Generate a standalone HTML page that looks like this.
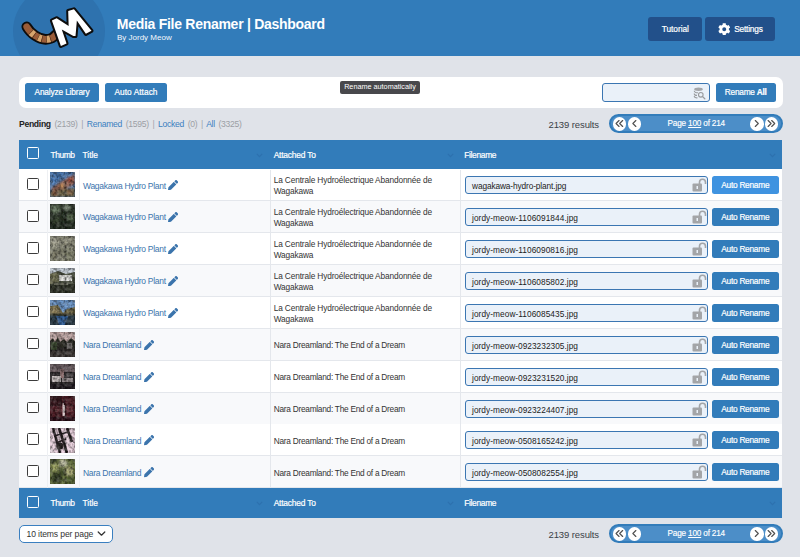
<!DOCTYPE html>
<html><head><meta charset="utf-8">
<style>
*{box-sizing:border-box;margin:0;padding:0}
html,body{width:800px;height:557px;overflow:hidden}
body{background:#e0e3e9;font-family:"Liberation Sans",sans-serif;font-size:8px;color:#333;position:relative}
div,span{white-space:nowrap}
.hdr{position:absolute;left:0;top:0;width:800px;height:56.400px;background:#327cba;overflow:hidden}
.circ{position:absolute;left:12.5px;top:-15px;width:92px;height:92px;border-radius:50%;background:#2e72ae}
.logo{position:absolute;left:15px;top:0;width:90px;height:56px}
.h1{position:absolute;left:116.800px;top:15.600px;font-size:14px;line-height:16px;font-weight:bold;color:#fff;letter-spacing:-0.277px}
.h2{position:absolute;left:117px;top:33.100px;font-size:8px;line-height:10px;color:#f4f8fc}
.hb{position:absolute;-webkit-text-stroke:0.200px #fff;top:16.500px;height:24.500px;background:#22508a;border-radius:3px;color:#fff;font-size:8.3px;line-height:24.500px}
.hb span{position:absolute;top:0}
.tb{position:absolute;left:18.500px;top:77px;width:764px;height:31.200px;background:#fff;border-radius:7px}
.btn{position:absolute;-webkit-text-stroke:0.200px #fff;height:18.500px;background:#327cba;border-radius:2.500px;color:#fff;font-size:8.3px;line-height:18.500px;text-align:center}
.tip{position:absolute;left:340px;top:81px;width:80px;height:12.500px;background:#48484c;border-radius:2px;color:#fff;font-size:7.250px;line-height:12.500px;text-align:center}
.inp{position:absolute;background:#eaf1f9;border:1.500px solid #3b76b2;border-radius:3px}
.filt{position:absolute;left:19px;top:119px;font-size:8.6px;line-height:11px;color:#9c9fa5;letter-spacing:-0.3px;word-spacing:1.6px}
.filt b{color:#222}.filt a{color:#3b7fc0}.filt s{text-decoration:none;color:#a2a5ab}
.res{position:absolute;font-size:9.5px;line-height:12px;color:#3b3f47;left:548.5px;letter-spacing:-0.105px}
.pg{position:absolute;left:609px;width:173.500px;height:18.750px;border-radius:9.500px;background:#4c8ec8;border:2px solid #327cba;color:#fff;font-size:8.2px;line-height:15px;letter-spacing:-0.174px}
.pg span{position:absolute;left:56.500px;top:0;-webkit-text-stroke:0.150px #fff}
.pg i{position:absolute;top:0.750px;width:13.500px;height:13.500px;border-radius:50%;background:#fff}
.pg svg{position:absolute;left:0;top:0}
.th{position:absolute;-webkit-text-stroke:0.200px #fff;left:18.500px;width:763.500px;height:30px;background:#327cba;color:#fff;font-size:8.4px;line-height:30px}
.th span{position:absolute;top:0}
.cb{position:absolute;left:8.900px;width:11.800px;height:11.500px;border:1.500px solid #3c3c3c;border-radius:1.500px;background:#fff}
.row{position:absolute;left:18.500px;width:763.500px;height:32px;background:#fff;border-bottom:1px solid #e4e7ec}
.row.alt{background:#f8f9fb}
.row .t{position:absolute;left:64.500px;top:11.250px;color:#3b74ac;font-size:8.5px;line-height:11px}
.row .pen{position:absolute;left:149.700px;top:11px}
.row .pen.n{left:125.500px}
.row .a{position:absolute;left:255.200px;font-size:8.3px;line-height:11px;color:#333}
.row .th1{position:absolute;left:31.900px;top:3.100px;width:25px;height:25px;overflow:hidden}
.row .f{position:absolute;left:446px;top:7px;width:243.500px;height:18px;background:#eaf1f9;border:1.500px solid #3b76b2;border-radius:3px;font-size:8.3px;line-height:18px;padding-left:6.500px;color:#222}
.row .lk{position:absolute;left:226px;top:1px}
.row .b{left:693.500px;top:7px;height:18px;line-height:18px;width:66.500px;letter-spacing:-0.249px}
.vl{position:absolute;top:169.500px;width:1px;height:320px;background:#e4e7ec}
.sel{position:absolute;left:18.500px;top:524.500px;width:94.500px;height:18.500px;border:1.500px solid #3a7fc0;border-radius:5px;background:#fff;font-size:8.6px;line-height:17px;padding-left:7px;color:#333;letter-spacing:-0.12px}
</style></head><body>
<svg width="0" height="0" style="position:absolute"><defs><filter id="bl" x="-20%" y="-20%" width="140%" height="140%"><feGaussianBlur stdDeviation="1.300"/></filter><filter id="bs" x="-20%" y="-20%" width="140%" height="140%"><feGaussianBlur stdDeviation="0.700"/></filter><filter id="nz" x="0" y="0" width="100%" height="100%"><feTurbulence type="fractalNoise" baseFrequency="0.350" numOctaves="2" seed="7"/><feColorMatrix type="matrix" values="0 0 0 0 0  0 0 0 0 0  0 0 0 0 0  0.900 0.900 0 0 -0.720"/></filter><filter id="nw" x="0" y="0" width="100%" height="100%"><feTurbulence type="fractalNoise" baseFrequency="0.300" numOctaves="2" seed="23"/><feColorMatrix type="matrix" values="0 0 0 0 1  0 0 0 0 1  0 0 0 0 1  0 0.900 0.900 0 -0.750"/></filter></defs></svg>
<div class="hdr"><div class="circ"></div>
<svg class="logo" viewBox="0 0 800 498">
<path d="M104,238 C138,300 215,350 272,350 S340,332 372,300" fill="none" stroke="#0d0d0d" stroke-width="94" stroke-linecap="round"/>
<path d="M104,238 C138,300 215,350 272,350 S340,332 372,300" fill="none" stroke="#9a5c38" stroke-width="60" stroke-linecap="round"/>
<path d="M104,238 C138,300 215,350 272,350 S340,332 372,300" fill="none" stroke="#d6a56e" stroke-width="60" stroke-dasharray="0 62 36 40 36 40 36 200"/>
<path d="M104,238 C138,300 215,350 272,350 S340,332 372,300" fill="none" stroke="#4a2a14" stroke-width="60" stroke-dasharray="0 59 5 34 5 35 5 31 5 35 5 31 5 200"/>
<path d="M328,183 L370,163 L477,231 L473,98 L524,83 L680,274 L630,301 L550,183 L538,321 L519,321 L416,263 L458,386 L408,409 Z" fill="#fff" stroke="#0d0d0d" stroke-width="36" stroke-linejoin="round" paint-order="stroke"/>
</svg>
<div class="h1">Media File Renamer | Dashboard</div><div class="h2">By Jordy Meow</div>
<div class="hb" style="left:648.300px;width:53.300px"><span style="left:13.500px;letter-spacing:-0.045px">Tutorial</span></div>
<div class="hb" style="left:704.600px;width:70.900px"><svg style="position:absolute;left:13px;top:6px" width="12.500" height="12.500" viewBox="0 0 512 512"><path fill="#fff" d="M487.400 315.700l-42.600-24.600c4.300-23.200 4.300-47 0-70.200l42.600-24.600c4.900-2.800 7.100-8.600 5.500-14-11.100-35.600-30-67.800-54.700-94.600-3.800-4.100-10-5.100-14.800-2.300L380.800 110c-17.900-15.400-38.500-27.300-60.800-35.100V25.800c0-5.600-3.900-10.500-9.400-11.700-36.700-8.200-74.300-7.800-109.200 0-5.500 1.200-9.400 6.100-9.400 11.700V75c-22.200 7.900-42.800 19.800-60.800 35.100L88.700 85.500c-4.900-2.800-11-1.900-14.800 2.300-24.700 26.700-43.600 58.900-54.700 94.600-1.700 5.400.6 11.200 5.500 14L67.300 221c-4.300 23.200-4.300 47 0 70.200l-42.600 24.600c-4.900 2.800-7.100 8.600-5.500 14 11.100 35.600 30 67.800 54.700 94.600 3.800 4.100 10 5.100 14.800 2.300l42.600-24.600c17.900 15.400 38.500 27.300 60.800 35.100v49.200c0 5.600 3.900 10.500 9.400 11.700 36.700 8.200 74.300 7.800 109.200 0 5.500-1.200 9.400-6.100 9.400-11.700v-49.200c22.200-7.900 42.800-19.800 60.800-35.100l42.600 24.600c4.900 2.800 11 1.900 14.800-2.300 24.700-26.700 43.600-58.900 54.700-94.600 1.500-5.500-.7-11.300-5.600-14.100zM256 336c-44.100 0-80-35.900-80-80s35.900-80 80-80 80 35.900 80 80-35.900 80-80 80z"/></svg><span style="left:29.600px;letter-spacing:-0.186px">Settings</span></div>
</div>
<div class="tb"></div>
<div class="btn" style="left:25px;top:83px;width:74px;letter-spacing:-0.146px">Analyze Library</div>
<div class="btn" style="left:105px;top:83px;width:62px;letter-spacing:0.051px">Auto Attach</div>
<div class="tip">Rename automatically</div>
<div class="inp" style="left:601.500px;top:83px;width:108px;height:18.500px"><svg style="position:absolute;left:89px;top:2px" width="14" height="14" viewBox="0 0 14 14" fill="none" stroke="#9a9c9f"><ellipse cx="6.500" cy="3.300" rx="4.300" ry="1.700" fill="#a4a6a9" stroke="none"/><path d="M2.200 4.800 C2.200 6.600 5 6.800 6 6.700 M2.200 7.400 C2.200 9 4 9.400 5 9.400 M2.200 10 C2.200 11.400 4 12 5.500 11.800" stroke-width="1.100"/><circle cx="8.800" cy="8.800" r="2.300" stroke-width="1.100"/><path d="M10.600 10.600 L12.800 12.800" stroke-width="1.300" stroke-linecap="round"/></svg></div>
<div class="btn" style="left:716px;top:83px;width:59.500px;letter-spacing:-0.244px">Rename <b>All</b></div>
<div class="filt"><b>Pending</b> (2139) <s>|</s> <a>Renamed</a> (1595) <s>|</s> <a>Locked</a> (0) <s>|</s> <a>All</a> (3325)</div>
<div class="res" style="top:118.600px">2139 results</div>
<div class="pg" style="top:114.25px"><span>Page <u>100</u> of 214</span><i style="left:1.5px"></i><i style="left:16.5px"></i><i style="left:139.14999999999998px"></i><i style="left:153.75px"></i><svg width="170" height="15" viewBox="0 -7.500 170 15" fill="none" stroke="#505050" stroke-width="1.150" stroke-linecap="round" stroke-linejoin="round"><path d="M8.05 -3 L5.050000000000001 0 L8.05 3" /><path d="M11.65 -3 L8.65 0 L11.65 3" /><path d="M24.85 -3 L21.85 0 L24.85 3" /><path d="M144.29999999999998 -3 L147.29999999999998 0 L144.29999999999998 3" /><path d="M157.1 -3 L160.1 0 L157.1 3" /><path d="M160.70000000000002 -3 L163.70000000000002 0 L160.70000000000002 3" /></svg></div>
<div class="th" style="top:139.500px"><div class="cb" style="left:8.600px;top:7.800px;width:12px;border-color:#fff;background:transparent;border-radius:1.500px"></div><svg style="position:absolute;left:237.5px;top:13px" width="7" height="5" viewBox="0 0 7 5"><path d="M0.800 0.800 L3.500 3.600 L6.200 0.800" fill="none" stroke="#2d71af" stroke-width="1.200"/></svg><svg style="position:absolute;left:428px;top:13px" width="7" height="5" viewBox="0 0 7 5"><path d="M0.800 0.800 L3.500 3.600 L6.200 0.800" fill="none" stroke="#2d71af" stroke-width="1.200"/></svg><svg style="position:absolute;left:750px;top:13px" width="7" height="5" viewBox="0 0 7 5"><path d="M0.800 0.800 L3.500 3.600 L6.200 0.800" fill="none" stroke="#2d71af" stroke-width="1.200"/></svg><span style="left:31.900px;letter-spacing:-0.366px">Thumb</span><span style="left:64.100px;letter-spacing:-0.053px">Title</span><span style="left:255.200px;letter-spacing:-0.189px">Attached To</span><span style="left:445.700px;letter-spacing:-0.307px">Filename</span></div>
<div class="row" style="top:169.25px"><div class="cb" style="top:9px"></div><svg class="th1" viewBox="0 0 25 25"><rect width="25" height="25" fill="#4f7cb4"/><g filter="url(#bl)"><path d="M25 2 L25 12 L8 21 L0 17 L12 9 Z" fill="#8e5e50"/><circle cx="20" cy="8" r="3" fill="#a8503e"/><circle cx="12" cy="14" r="2.500" fill="#c08c5c"/><path d="M0 19 L25 16 V25 H0Z" fill="#6e6444"/><circle cx="5" cy="21" r="3" fill="#845a40"/><circle cx="5" cy="5" r="5" fill="#4674b0"/><circle cx="20" cy="20" r="3" fill="#7c5a3c"/></g><rect width="25" height="25" filter="url(#nz)"/><rect width="25" height="25" filter="url(#nw)" opacity="0.35"/></svg><div class="t" style="letter-spacing:-0.288px">Wagakawa Hydro Plant</div><svg class="pen" viewBox="0 0 512 512" width="10.2" height="10.2"><path fill="#3b74ac" d="M497.900 142.100l-46.100 46.100c-4.700 4.700-12.300 4.700-17 0l-111-111c-4.700-4.700-4.700-12.300 0-17l46.100-46.100c18.700-18.700 49.100-18.700 67.900 0l60.100 60.100c18.800 18.700 18.800 49.100 0 67.900zM284.200 99.800L21.600 362.400.4 483.900c-2.900 16.400 11.400 30.600 27.800 27.800l121.500-21.300 262.600-262.600c4.700-4.700 4.700-12.300 0-17l-111-111c-4.800-4.700-12.400-4.700-17.100 0z"/></svg><div class="a" style="top:6.1px;letter-spacing:-0.134px">La Centrale Hydroélectrique Abandonnée de<br>Wagakawa</div><div class="f"><span style="letter-spacing:-0.109px">wagakawa-hydro-plant.jpg</span><svg class="lk" viewBox="0 0 15 14" width="15" height="14"><path d="M7.500 6.500V4.200a3 3 0 0 1 6 0V6" fill="none" stroke="#a3a5a8" stroke-width="1.600"/><rect x="0.500" y="5.500" width="9.500" height="8" rx="1" fill="#a3a5a8"/><rect x="4.500" y="8" width="1.500" height="3" fill="#eaf1f9"/></svg></div><div class="btn b" style="background:#3f93e0">Auto Rename</div></div>
<div class="row alt" style="top:201.15px"><div class="cb" style="top:9px"></div><svg class="th1" viewBox="0 0 25 25"><rect width="25" height="25" fill="#232c20"/><g filter="url(#bl)"><circle cx="6" cy="5" r="5" fill="#66775e"/><circle cx="17" cy="3" r="3.500" fill="#7d8a76"/><circle cx="21" cy="13" r="4" fill="#46583e"/><circle cx="7" cy="16" r="3.500" fill="#3c4c34"/><path d="M12 0 L13 25" stroke="#1c2418" stroke-width="2"/><circle cx="15" cy="21" r="4" fill="#1f281c"/><circle cx="3" cy="22" r="3" fill="#1f281c"/></g><rect width="25" height="25" filter="url(#nz)"/><rect width="25" height="25" filter="url(#nw)" opacity="0.35"/></svg><div class="t" style="letter-spacing:-0.288px">Wagakawa Hydro Plant</div><svg class="pen" viewBox="0 0 512 512" width="10.2" height="10.2"><path fill="#3b74ac" d="M497.900 142.100l-46.100 46.100c-4.700 4.700-12.300 4.700-17 0l-111-111c-4.700-4.700-4.700-12.300 0-17l46.100-46.100c18.700-18.700 49.100-18.700 67.900 0l60.100 60.100c18.800 18.700 18.800 49.100 0 67.900zM284.200 99.800L21.600 362.400.4 483.900c-2.900 16.400 11.400 30.600 27.800 27.800l121.500-21.300 262.600-262.600c4.700-4.700 4.700-12.300 0-17l-111-111c-4.800-4.700-12.400-4.700-17.100 0z"/></svg><div class="a" style="top:6.1px;letter-spacing:-0.134px">La Centrale Hydroélectrique Abandonnée de<br>Wagakawa</div><div class="f"><span style="letter-spacing:0.058px">jordy-meow-1106091844.jpg</span><svg class="lk" viewBox="0 0 15 14" width="15" height="14"><path d="M7.500 6.500V4.200a3 3 0 0 1 6 0V6" fill="none" stroke="#a3a5a8" stroke-width="1.600"/><rect x="0.500" y="5.500" width="9.500" height="8" rx="1" fill="#a3a5a8"/><rect x="4.500" y="8" width="1.500" height="3" fill="#eaf1f9"/></svg></div><div class="btn b">Auto Rename</div></div>
<div class="row" style="top:233.05px"><div class="cb" style="top:9px"></div><svg class="th1" viewBox="0 0 25 25"><rect width="25" height="25" fill="#8b8b79"/><g filter="url(#bl)"><circle cx="6" cy="6" r="5" fill="#a3a18f"/><circle cx="19" cy="18" r="6" fill="#7a7c66"/><circle cx="18" cy="6" r="4" fill="#9a9884"/><path d="M2 22 L22 6" stroke="#6a6a58" stroke-width="2"/><circle cx="6" cy="19" r="4" fill="#817f6b"/></g><rect width="25" height="25" filter="url(#nz)"/><rect width="25" height="25" filter="url(#nw)" opacity="0.35"/></svg><div class="t" style="letter-spacing:-0.288px">Wagakawa Hydro Plant</div><svg class="pen" viewBox="0 0 512 512" width="10.2" height="10.2"><path fill="#3b74ac" d="M497.900 142.100l-46.100 46.100c-4.700 4.700-12.300 4.700-17 0l-111-111c-4.700-4.700-4.700-12.300 0-17l46.100-46.100c18.700-18.700 49.100-18.700 67.900 0l60.100 60.100c18.800 18.700 18.800 49.100 0 67.900zM284.200 99.800L21.600 362.400.4 483.900c-2.900 16.400 11.400 30.600 27.800 27.800l121.500-21.300 262.600-262.600c4.700-4.700 4.700-12.300 0-17l-111-111c-4.800-4.700-12.400-4.700-17.100 0z"/></svg><div class="a" style="top:6.1px;letter-spacing:-0.134px">La Centrale Hydroélectrique Abandonnée de<br>Wagakawa</div><div class="f"><span style="letter-spacing:0.058px">jordy-meow-1106090816.jpg</span><svg class="lk" viewBox="0 0 15 14" width="15" height="14"><path d="M7.500 6.500V4.200a3 3 0 0 1 6 0V6" fill="none" stroke="#a3a5a8" stroke-width="1.600"/><rect x="0.500" y="5.500" width="9.500" height="8" rx="1" fill="#a3a5a8"/><rect x="4.500" y="8" width="1.500" height="3" fill="#eaf1f9"/></svg></div><div class="btn b">Auto Rename</div></div>
<div class="row alt" style="top:264.95px"><div class="cb" style="top:9px"></div><svg class="th1" viewBox="0 0 25 25"><rect width="25" height="25" fill="#4a4f3e"/><g filter="url(#bs)"><path d="M0 0 H25 V4 L16 6 L8 3 L0 6Z" fill="#c9d2dc"/><rect x="9" y="7" width="13" height="6" fill="#e4e4e0"/><path d="M0 6 L8 4 L9 14 L0 16Z" fill="#6a6a4e"/><rect y="16" width="25" height="9" fill="#2e3328"/><rect x="4" y="15" width="14" height="2" fill="#6e705e"/></g><rect width="25" height="25" filter="url(#nz)"/><rect width="25" height="25" filter="url(#nw)" opacity="0.35"/></svg><div class="t" style="letter-spacing:-0.288px">Wagakawa Hydro Plant</div><svg class="pen" viewBox="0 0 512 512" width="10.2" height="10.2"><path fill="#3b74ac" d="M497.900 142.100l-46.100 46.100c-4.700 4.700-12.300 4.700-17 0l-111-111c-4.700-4.700-4.700-12.300 0-17l46.100-46.100c18.700-18.700 49.100-18.700 67.900 0l60.100 60.100c18.800 18.700 18.800 49.100 0 67.900zM284.200 99.800L21.600 362.400.4 483.900c-2.900 16.400 11.400 30.600 27.800 27.800l121.500-21.300 262.600-262.600c4.700-4.700 4.700-12.300 0-17l-111-111c-4.800-4.700-12.400-4.700-17.100 0z"/></svg><div class="a" style="top:6.1px;letter-spacing:-0.134px">La Centrale Hydroélectrique Abandonnée de<br>Wagakawa</div><div class="f"><span style="letter-spacing:0.058px">jordy-meow-1106085802.jpg</span><svg class="lk" viewBox="0 0 15 14" width="15" height="14"><path d="M7.500 6.500V4.200a3 3 0 0 1 6 0V6" fill="none" stroke="#a3a5a8" stroke-width="1.600"/><rect x="0.500" y="5.500" width="9.500" height="8" rx="1" fill="#a3a5a8"/><rect x="4.500" y="8" width="1.500" height="3" fill="#eaf1f9"/></svg></div><div class="btn b">Auto Rename</div></div>
<div class="row" style="top:296.85px"><div class="cb" style="top:9px"></div><svg class="th1" viewBox="0 0 25 25"><rect width="25" height="25" fill="#6d98cc"/><g filter="url(#bs)"><path d="M0 6 L8 5 L13 13 L17 9 L25 7 V17 H0Z" fill="#6b6240"/><path d="M0 7 L6 7 L12 14 L0 15Z" fill="#8a7c56"/><path d="M0 14 H25 V25 H0Z" fill="#2c3a46"/><path d="M6 16 L18 16 L15 25 L9 25Z" fill="#2f5c96"/><rect y="13.500" width="25" height="2" fill="#3a3a2c"/></g><rect width="25" height="25" filter="url(#nz)"/><rect width="25" height="25" filter="url(#nw)" opacity="0.35"/></svg><div class="t" style="letter-spacing:-0.288px">Wagakawa Hydro Plant</div><svg class="pen" viewBox="0 0 512 512" width="10.2" height="10.2"><path fill="#3b74ac" d="M497.900 142.100l-46.100 46.100c-4.700 4.700-12.300 4.700-17 0l-111-111c-4.700-4.700-4.700-12.300 0-17l46.100-46.100c18.700-18.700 49.100-18.700 67.900 0l60.100 60.100c18.800 18.700 18.800 49.100 0 67.900zM284.200 99.800L21.600 362.400.4 483.900c-2.900 16.400 11.400 30.600 27.800 27.800l121.500-21.300 262.600-262.600c4.700-4.700 4.700-12.300 0-17l-111-111c-4.800-4.700-12.400-4.700-17.100 0z"/></svg><div class="a" style="top:6.1px;letter-spacing:-0.134px">La Centrale Hydroélectrique Abandonnée de<br>Wagakawa</div><div class="f"><span style="letter-spacing:0.058px">jordy-meow-1106085435.jpg</span><svg class="lk" viewBox="0 0 15 14" width="15" height="14"><path d="M7.500 6.500V4.200a3 3 0 0 1 6 0V6" fill="none" stroke="#a3a5a8" stroke-width="1.600"/><rect x="0.500" y="5.500" width="9.500" height="8" rx="1" fill="#a3a5a8"/><rect x="4.500" y="8" width="1.500" height="3" fill="#eaf1f9"/></svg></div><div class="btn b">Auto Rename</div></div>
<div class="row alt" style="top:328.75px"><div class="cb" style="top:9px"></div><svg class="th1" viewBox="0 0 25 25"><rect width="25" height="25" fill="#2b2725"/><g filter="url(#bs)"><rect width="25" height="10" fill="#c4aaa8"/><path d="M0 9 L3 6 L5 10 L8 5 L10 10 L14 7 L17 10 L21 6 L25 9 V16 H0Z" fill="#2a2c24"/><rect x="17" y="11" width="5" height="6" fill="#5c5856"/><rect x="1" y="10" width="6" height="8" fill="#34422c"/><rect y="19" width="25" height="6" fill="#3a3433"/></g><rect width="25" height="25" filter="url(#nz)"/><rect width="25" height="25" filter="url(#nw)" opacity="0.35"/></svg><div class="t" style="letter-spacing:-0.295px">Nara Dreamland</div><svg class="pen n" viewBox="0 0 512 512" width="10.2" height="10.2"><path fill="#3b74ac" d="M497.900 142.100l-46.100 46.100c-4.700 4.700-12.300 4.700-17 0l-111-111c-4.700-4.700-4.700-12.300 0-17l46.100-46.100c18.700-18.700 49.100-18.700 67.900 0l60.100 60.100c18.800 18.700 18.800 49.100 0 67.900zM284.200 99.800L21.600 362.400.4 483.900c-2.900 16.400 11.400 30.600 27.800 27.800l121.500-21.300 262.600-262.600c4.700-4.700 4.700-12.300 0-17l-111-111c-4.800-4.700-12.400-4.700-17.100 0z"/></svg><div class="a" style="top:11.5px;letter-spacing:-0.259px">Nara Dreamland: The End of a Dream</div><div class="f"><span style="letter-spacing:0.033px">jordy-meow-0923232305.jpg</span><svg class="lk" viewBox="0 0 15 14" width="15" height="14"><path d="M7.500 6.500V4.200a3 3 0 0 1 6 0V6" fill="none" stroke="#a3a5a8" stroke-width="1.600"/><rect x="0.500" y="5.500" width="9.500" height="8" rx="1" fill="#a3a5a8"/><rect x="4.500" y="8" width="1.500" height="3" fill="#eaf1f9"/></svg></div><div class="btn b">Auto Rename</div></div>
<div class="row" style="top:360.65px"><div class="cb" style="top:9px"></div><svg class="th1" viewBox="0 0 25 25"><rect width="25" height="25" fill="#2a2527"/><g filter="url(#bs)"><rect width="25" height="8" fill="#6b5c60"/><rect x="10" y="5" width="4" height="9" fill="#8a6c6c"/><rect x="2" y="12" width="9" height="6" fill="#cfc6c6"/><rect x="12" y="14" width="11" height="4" fill="#8e8486"/><rect x="15" y="9" width="9" height="4" fill="#4c4446"/><rect y="20" width="25" height="5" fill="#1d191b"/></g><rect width="25" height="25" filter="url(#nz)"/><rect width="25" height="25" filter="url(#nw)" opacity="0.35"/></svg><div class="t" style="letter-spacing:-0.295px">Nara Dreamland</div><svg class="pen n" viewBox="0 0 512 512" width="10.2" height="10.2"><path fill="#3b74ac" d="M497.900 142.100l-46.100 46.100c-4.700 4.700-12.300 4.700-17 0l-111-111c-4.700-4.700-4.700-12.300 0-17l46.100-46.100c18.700-18.700 49.100-18.700 67.900 0l60.100 60.100c18.800 18.700 18.800 49.100 0 67.900zM284.200 99.800L21.600 362.400.4 483.900c-2.900 16.400 11.400 30.600 27.800 27.800l121.500-21.300 262.600-262.600c4.700-4.700 4.700-12.300 0-17l-111-111c-4.800-4.700-12.400-4.700-17.100 0z"/></svg><div class="a" style="top:11.5px;letter-spacing:-0.259px">Nara Dreamland: The End of a Dream</div><div class="f"><span style="letter-spacing:0.033px">jordy-meow-0923231520.jpg</span><svg class="lk" viewBox="0 0 15 14" width="15" height="14"><path d="M7.500 6.500V4.200a3 3 0 0 1 6 0V6" fill="none" stroke="#a3a5a8" stroke-width="1.600"/><rect x="0.500" y="5.500" width="9.500" height="8" rx="1" fill="#a3a5a8"/><rect x="4.500" y="8" width="1.500" height="3" fill="#eaf1f9"/></svg></div><div class="btn b">Auto Rename</div></div>
<div class="row alt" style="top:392.55px"><div class="cb" style="top:9px"></div><svg class="th1" viewBox="0 0 25 25"><rect width="25" height="25" fill="#4a1a22"/><g filter="url(#bs)"><rect width="12" height="10" fill="#34121a"/><rect x="12.500" y="7" width="2.500" height="13" fill="#d9c6c8"/><path d="M14 3 L15 9" stroke="#2a0c12" stroke-width="2"/><rect x="5" y="13" width="7" height="3" fill="#6a3a40"/><rect y="21" width="25" height="4" fill="#2a1015"/><rect x="16" y="10" width="8" height="6" fill="#5a2029"/></g><rect width="25" height="25" filter="url(#nz)"/><rect width="25" height="25" filter="url(#nw)" opacity="0.35"/></svg><div class="t" style="letter-spacing:-0.295px">Nara Dreamland</div><svg class="pen n" viewBox="0 0 512 512" width="10.2" height="10.2"><path fill="#3b74ac" d="M497.900 142.100l-46.100 46.100c-4.700 4.700-12.300 4.700-17 0l-111-111c-4.700-4.700-4.700-12.300 0-17l46.100-46.100c18.700-18.700 49.100-18.700 67.900 0l60.100 60.100c18.800 18.700 18.800 49.100 0 67.900zM284.200 99.800L21.600 362.400.4 483.900c-2.900 16.400 11.400 30.600 27.800 27.800l121.500-21.300 262.600-262.600c4.700-4.700 4.700-12.300 0-17l-111-111c-4.800-4.700-12.400-4.700-17.100 0z"/></svg><div class="a" style="top:11.5px;letter-spacing:-0.259px">Nara Dreamland: The End of a Dream</div><div class="f"><span style="letter-spacing:0.033px">jordy-meow-0923224407.jpg</span><svg class="lk" viewBox="0 0 15 14" width="15" height="14"><path d="M7.500 6.500V4.200a3 3 0 0 1 6 0V6" fill="none" stroke="#a3a5a8" stroke-width="1.600"/><rect x="0.500" y="5.500" width="9.500" height="8" rx="1" fill="#a3a5a8"/><rect x="4.500" y="8" width="1.500" height="3" fill="#eaf1f9"/></svg></div><div class="btn b">Auto Rename</div></div>
<div class="row" style="top:424.45px"><div class="cb" style="top:9px"></div><svg class="th1" viewBox="0 0 25 25"><rect width="25" height="25" fill="#ead2de"/><g filter="url(#bs)"><path d="M3 0 L10 25 M9 0 L17 25 M17 0 L22 14" stroke="#221a1e" stroke-width="2.600"/><path d="M4 8 L18 4 M6 15 L16 11" stroke="#221a1e" stroke-width="1.600"/><circle cx="10" cy="18" r="3.500" fill="#2a2024"/><path d="M0 19 L6 25 H0Z" fill="#f2e2ea"/></g><rect width="25" height="25" filter="url(#nz)"/><rect width="25" height="25" filter="url(#nw)" opacity="0.35"/></svg><div class="t" style="letter-spacing:-0.295px">Nara Dreamland</div><svg class="pen n" viewBox="0 0 512 512" width="10.2" height="10.2"><path fill="#3b74ac" d="M497.900 142.100l-46.100 46.100c-4.700 4.700-12.300 4.700-17 0l-111-111c-4.700-4.700-4.700-12.300 0-17l46.100-46.100c18.700-18.700 49.100-18.700 67.900 0l60.100 60.100c18.800 18.700 18.800 49.100 0 67.900zM284.200 99.800L21.600 362.400.4 483.900c-2.900 16.400 11.400 30.600 27.800 27.800l121.500-21.300 262.600-262.600c4.700-4.700 4.700-12.300 0-17l-111-111c-4.800-4.700-12.400-4.700-17.100 0z"/></svg><div class="a" style="top:11.5px;letter-spacing:-0.259px">Nara Dreamland: The End of a Dream</div><div class="f"><span style="letter-spacing:0.033px">jordy-meow-0508165242.jpg</span><svg class="lk" viewBox="0 0 15 14" width="15" height="14"><path d="M7.500 6.500V4.200a3 3 0 0 1 6 0V6" fill="none" stroke="#a3a5a8" stroke-width="1.600"/><rect x="0.500" y="5.500" width="9.500" height="8" rx="1" fill="#a3a5a8"/><rect x="4.500" y="8" width="1.500" height="3" fill="#eaf1f9"/></svg></div><div class="btn b">Auto Rename</div></div>
<div class="row alt" style="top:456.35px"><div class="cb" style="top:9px"></div><svg class="th1" viewBox="0 0 25 25"><rect width="25" height="25" fill="#64703c"/><g filter="url(#bl)"><circle cx="13" cy="4" r="4" fill="#c4c4a8"/><circle cx="5" cy="8" r="4" fill="#9aa060"/><circle cx="19" cy="12" r="5" fill="#a6a66e"/><circle cx="7" cy="19" r="5" fill="#323c22"/><circle cx="20" cy="21" r="4" fill="#4a5a2c"/><circle cx="13" cy="13" r="3" fill="#3c4826"/><circle cx="3" cy="2" r="3" fill="#2e3820"/></g><rect width="25" height="25" filter="url(#nz)"/><rect width="25" height="25" filter="url(#nw)" opacity="0.35"/></svg><div class="t" style="letter-spacing:-0.295px">Nara Dreamland</div><svg class="pen n" viewBox="0 0 512 512" width="10.2" height="10.2"><path fill="#3b74ac" d="M497.900 142.100l-46.100 46.100c-4.700 4.700-12.300 4.700-17 0l-111-111c-4.700-4.700-4.700-12.300 0-17l46.100-46.100c18.700-18.700 49.100-18.700 67.900 0l60.100 60.100c18.800 18.700 18.800 49.100 0 67.900zM284.200 99.800L21.600 362.400.4 483.900c-2.900 16.400 11.400 30.600 27.800 27.800l121.500-21.300 262.600-262.600c4.700-4.700 4.700-12.300 0-17l-111-111c-4.800-4.700-12.400-4.700-17.100 0z"/></svg><div class="a" style="top:11.5px;letter-spacing:-0.259px">Nara Dreamland: The End of a Dream</div><div class="f"><span style="letter-spacing:0.033px">jordy-meow-0508082554.jpg</span><svg class="lk" viewBox="0 0 15 14" width="15" height="14"><path d="M7.500 6.500V4.200a3 3 0 0 1 6 0V6" fill="none" stroke="#a3a5a8" stroke-width="1.600"/><rect x="0.500" y="5.500" width="9.500" height="8" rx="1" fill="#a3a5a8"/><rect x="4.500" y="8" width="1.500" height="3" fill="#eaf1f9"/></svg></div><div class="btn b">Auto Rename</div></div>
<div class="vl" style="left:47px;background:#eef0f3"></div><div class="vl" style="left:79px;background:#eef0f3"></div><div class="vl" style="left:269.500px"></div><div class="vl" style="left:460px"></div>
<div class="th" style="top:488.250px;height:29.250px;line-height:30.750px"><div class="cb" style="left:8.600px;top:7.800px;width:12px;border-color:#fff;background:transparent;border-radius:1.500px"></div><svg style="position:absolute;left:237.5px;top:13px" width="7" height="5" viewBox="0 0 7 5"><path d="M0.800 0.800 L3.500 3.600 L6.200 0.800" fill="none" stroke="#2d71af" stroke-width="1.200"/></svg><svg style="position:absolute;left:428px;top:13px" width="7" height="5" viewBox="0 0 7 5"><path d="M0.800 0.800 L3.500 3.600 L6.200 0.800" fill="none" stroke="#2d71af" stroke-width="1.200"/></svg><svg style="position:absolute;left:750px;top:13px" width="7" height="5" viewBox="0 0 7 5"><path d="M0.800 0.800 L3.500 3.600 L6.200 0.800" fill="none" stroke="#2d71af" stroke-width="1.200"/></svg><span style="left:31.900px;letter-spacing:-0.366px">Thumb</span><span style="left:64.100px;letter-spacing:-0.053px">Title</span><span style="left:255.200px;letter-spacing:-0.189px">Attached To</span><span style="left:445.700px;letter-spacing:-0.307px">Filename</span></div>
<div class="sel">10 items per page<svg style="position:absolute;left:77.700px;top:5.700px" width="9" height="6" viewBox="0 0 9 6"><path d="M1.200 1 L4.500 4.200 L7.800 1" fill="none" stroke="#333" stroke-width="1.250" stroke-linecap="round" stroke-linejoin="round"/></svg></div>
<div class="res" style="top:528.600px">2139 results</div>
<div class="pg" style="top:524.25px"><span>Page <u>100</u> of 214</span><i style="left:1.5px"></i><i style="left:16.5px"></i><i style="left:139.14999999999998px"></i><i style="left:153.75px"></i><svg width="170" height="15" viewBox="0 -7.500 170 15" fill="none" stroke="#505050" stroke-width="1.150" stroke-linecap="round" stroke-linejoin="round"><path d="M8.05 -3 L5.050000000000001 0 L8.05 3" /><path d="M11.65 -3 L8.65 0 L11.65 3" /><path d="M24.85 -3 L21.85 0 L24.85 3" /><path d="M144.29999999999998 -3 L147.29999999999998 0 L144.29999999999998 3" /><path d="M157.1 -3 L160.1 0 L157.1 3" /><path d="M160.70000000000002 -3 L163.70000000000002 0 L160.70000000000002 3" /></svg></div>
</body></html>
